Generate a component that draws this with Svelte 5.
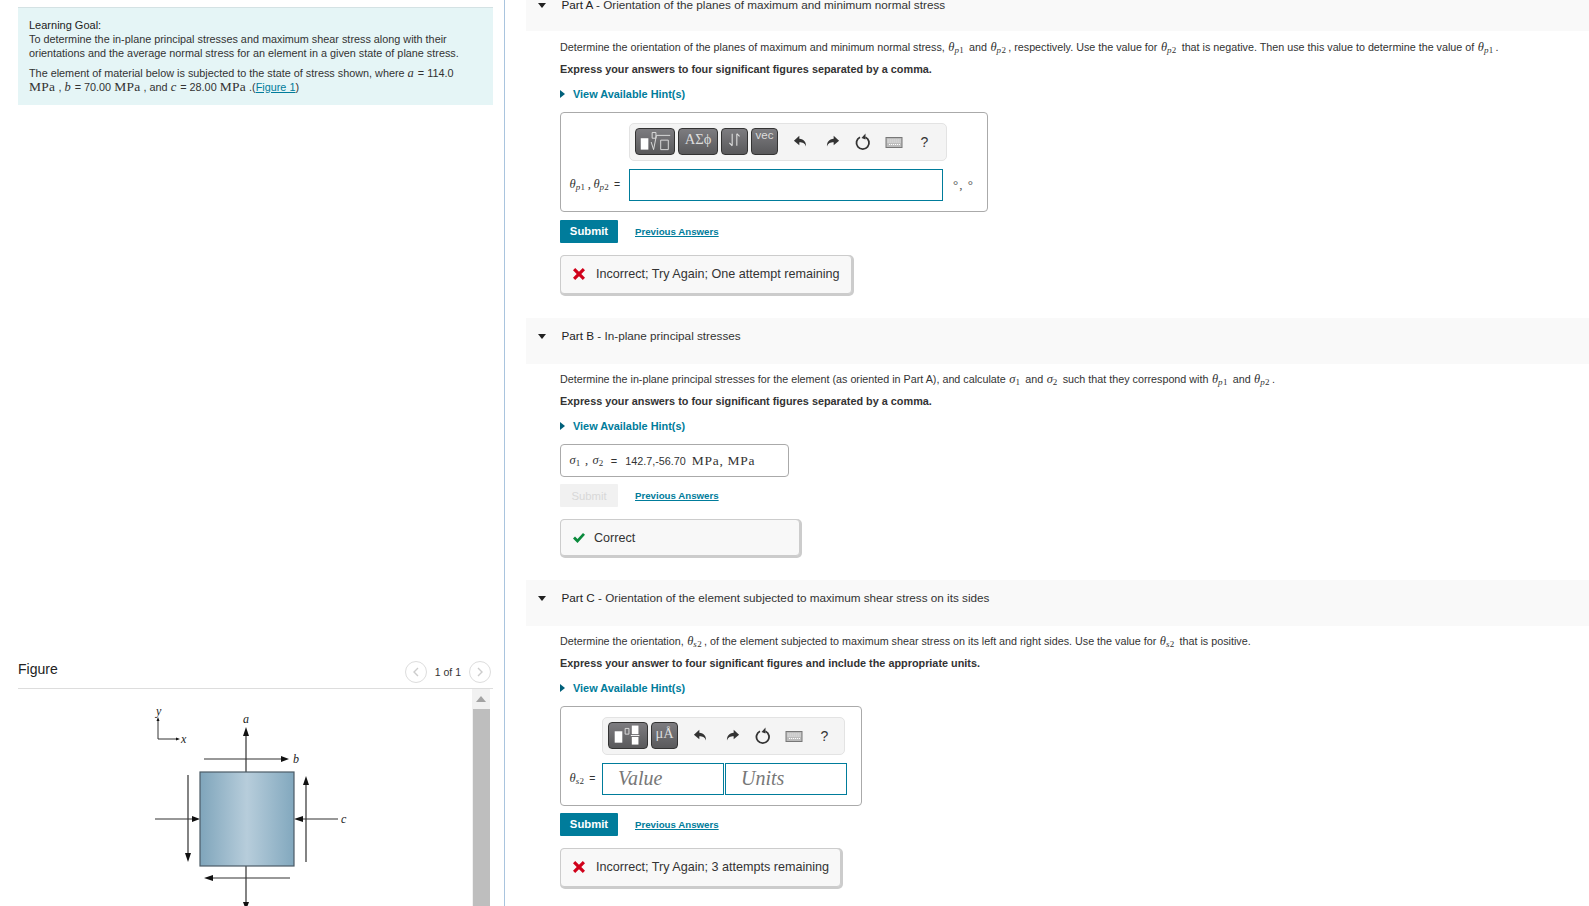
{#snippet sym(letter, sub)}
  <span class="math"><i>{letter}</i><sub>{sub}</sub></span>
{/snippet}

{#snippet theta(kind, num)}
  <span class="math"><i>θ</i><sub><i>{kind}</i>{num}</sub></span>
{/snippet}

{#snippet tools()}
  <span class="tool">
    <svg width="20" height="20" viewBox="0 0 24 24"><path fill="#333" d="M10 8V4.500L3.500 10.500 10 16v-3.600c4 0 6.500 1 8 5 .5-5-2.500-9-8-9.400z" /></svg>
  </span>
  <span class="tool">
    <svg width="20" height="20" viewBox="0 0 24 24"><path fill="#333" d="M14 8V4.500l6.500 6L14 16v-3.600c-4 0-6.500 1-8 5-.5-5 2.500-9 8-9.400z" /></svg>
  </span>
  <span class="tool">
    <svg width="24" height="24" viewBox="0 0 24 24">
      <path fill="none" stroke="#333" stroke-width="1.800" d="M9 7.200a6.300 6.300 0 1 0 5.500 0" />
      <path fill="#333" d="M14.500 3.500v6l-4-1.500z" />
    </svg>
  </span>
  <span class="tool">
    <svg width="24" height="24" viewBox="0 0 24 24">
      <rect x="4" y="7.500" width="16" height="10" fill="#bbb" stroke="#777" />
      <path fill="none" stroke="#fff" stroke-dasharray="1.200 .8" d="M5.500 10h13M5.500 12h13M7 14.500h11" />
    </svg>
  </span>
  <span class="tool help">?</span>
{/snippet}

{#snippet wrong(text)}
  <div class="feedback">
    <svg width="14" height="14" viewBox="0 0 14 14"><path fill="#d0021b" d="M1 3.200 3.200 1 7 4.700 10.800 1 13 3.200 9.300 7 13 10.800 10.800 13 7 9.300 3.200 13 1 10.800 4.700 7z" /></svg>
    <span class="fb-text">{text}</span>
  </div>
{/snippet}

{#snippet hint()}
  <div class="hint"><span class="caret"></span>View Available Hint(s)</div>
{/snippet}

<div class="page">
  <aside class="left">
    <div class="goal">
      <p>
        <span class="goal-title">Learning Goal:</span><br />
        To determine the in-plane principal stresses and maximum shear stress along with their
        orientations and the average normal stress for an element in a given state of plane stress.
      </p>
      <p>
        The element of material below is subjected to the state of stress shown, where <i class="mi">a</i> = 114.0<br />
        <span class="unit">MPa</span> , <i class="mi">b</i> = 70.00 <span class="unit">MPa</span> , and <i class="mi">c</i> = 28.00
        <span class="unit">MPa</span> .(<a href="#fig">Figure 1</a>)
      </p>
    </div>

    <section class="figure">
      <header class="fig-head">
        <h2>Figure</h2>
        <div class="pager">
          <span class="circle">
            <svg width="10" height="10" viewBox="0 0 10 10"><path fill="none" stroke="#ccc" stroke-width="1.400" d="M7 1 3 5l4 4" /></svg>
          </span>
          <span class="count">1 of 1</span>
          <span class="circle">
            <svg width="10" height="10" viewBox="0 0 10 10"><path fill="none" stroke="#ccc" stroke-width="1.400" d="m3 1 4 4-4 4" /></svg>
          </span>
        </div>
      </header>
      <div class="fig-body">
        <div class="fig-canvas">
          <svg class="diagram" width="230" height="217" viewBox="0 0 230 217">
            <defs>
              <linearGradient id="steel" x1="0" x2="1" y1="0" y2="0">
                <stop offset="0" stop-color="#7fa5bb" />
                <stop offset=".5" stop-color="#b7cddb" />
                <stop offset="1" stop-color="#82a8be" />
              </linearGradient>
            </defs>
            <g fill="none" stroke="#333" stroke-width="1.200">
              <path stroke-width="1" d="M18 30v19h19" />
              <path d="M106 45v37M64 69h79M106 176v37M15 129h37M162 129h36M48 85v79M166 94v78M72 188h78" />
            </g>
            <g fill="#111">
              <path d="M18 27l1.500 4h-3zM40 49l-4 1.500v-3z" />
              <path d="M106 37l3 9h-6zM149 69l-8 3v-6zM60 129l-8 3v-6zM154 129l9-3v6zM48 172l-3-9h6zM166 86l3 9h-6zM64 188l9-3v6zM106 220l-3-8h6z" />
            </g>
            <rect x="60" y="82" width="94" height="94" fill="url(#steel)" stroke="#4b5b66" stroke-width="1.200" />
            <g class="fig-label">
              <text x="16" y="25">y</text>
              <text x="41" y="53">x</text>
              <text x="103" y="33">a</text>
              <text x="153" y="73">b</text>
              <text x="201" y="133">c</text>
            </g>
          </svg>
        </div>
        <div class="scroll">
          <span class="scroll-up"></span>
          <span class="thumb"></span>
        </div>
      </div>
    </section>
  </aside>

  <main class="right">
    <section class="part part-a">
      <div class="part-head"><span class="tri"></span><b>Part A</b> - Orientation of the planes of maximum and minimum normal stress</div>
      <div class="part-body">
        <p class="ask">Determine the orientation of the planes of maximum and minimum normal stress, {@render theta("p", "1")} and {@render theta("p", "2")}, respectively. Use the value for {@render theta("p", "2")} that is negative. Then use this value to determine the value of {@render theta("p", "1")}.</p>
        <p class="express">Express your answers to four significant figures separated by a comma.</p>
        {@render hint()}
        <div class="answer wide">
          <div class="toolbar t-a">
            <span class="btn b40">
              <svg width="40" height="27" viewBox="0 0 40 27">
                <rect x="5" y="9" width="8" height="12" fill="#fff" />
                <path fill="none" stroke="#ddd" d="M17 3h4v6h-4zM16 13l2.500 8 3-15H36M26 11h8v10h-8z" />
              </svg>
            </span>
            <span class="btn b40 greek">ΑΣϕ</span>
            <span class="btn b27">
              <svg width="27" height="27" viewBox="0 0 27 27"><path fill="none" stroke="#ddd" stroke-width="1.200" d="M11 4v13m-3-3 3 3M16 17V4m0 0 3 3" /></svg>
            </span>
            <span class="btn b27 vec">vec</span>
            <div class="tools">{@render tools()}</div>
          </div>
          <div class="row">
            <span class="lab lab-a">{@render theta("p", "1")}<span class="math"> ,  </span>{@render theta("p", "2")} =</span>
            <span class="input i-a"></span>
            <span class="deg">°, °</span>
          </div>
        </div>
        <div class="actions">
          <span class="submit">Submit</span>
          <a class="prev" href="#a">Previous Answers</a>
        </div>
        {@render wrong("Incorrect; Try Again; One attempt remaining")}
      </div>
    </section>

    <section class="part part-b">
      <div class="part-head"><span class="tri"></span><b>Part B</b> - In-plane principal stresses</div>
      <div class="part-body">
        <p class="ask">Determine the in-plane principal stresses for the element (as oriented in Part A), and calculate {@render sym("σ", "1")} and {@render sym("σ", "2")} such that they correspond with {@render theta("p", "1")} and {@render theta("p", "2")}.</p>
        <p class="express">Express your answers to four significant figures separated by a comma.</p>
        {@render hint()}
        <div class="answer done">
          {@render sym("σ", "1")}<span class="math">, </span>{@render sym("σ", "2")} = <span class="val">142.7,-56.70</span> <span class="unit big">MPa, MPa</span>
        </div>
        <div class="actions">
          <span class="submit off">Submit</span>
          <a class="prev" href="#b">Previous Answers</a>
        </div>
        <div class="feedback ok">
          <svg width="14" height="14" viewBox="0 0 14 14"><path fill="#0a8a3c" d="M1 7.500 3 5.500l2.500 2.600L11 2l2 1.800-7.500 8.200z" /></svg>
          <span class="fb-text">Correct</span>
        </div>
      </div>
    </section>

    <section class="part part-c">
      <div class="part-head"><span class="tri"></span><b>Part C</b> - Orientation of the element subjected to maximum shear stress on its sides</div>
      <div class="part-body">
        <p class="ask">Determine the orientation, {@render theta("s", "2")}, of the element subjected to maximum shear stress on its left and right sides. Use the value for {@render theta("s", "2")} that is positive.</p>
        <p class="express">Express your answer to four significant figures and include the appropriate units.</p>
        {@render hint()}
        <div class="answer narrow">
          <div class="toolbar t-c">
            <span class="btn b40">
              <svg width="40" height="27" viewBox="0 0 40 27">
                <rect x="6" y="8" width="8" height="12" fill="#fff" />
                <path fill="none" stroke="#ddd" d="M17 5h4v6h-4z" />
                <rect x="24" y="2" width="7" height="9" fill="#fff" />
                <rect x="24" y="14" width="7" height="8" fill="#fff" />
                <path stroke="#fff" d="M23 12.500h9" />
              </svg>
            </span>
            <span class="btn b27 greek">μÅ</span>
            <div class="tools">{@render tools()}</div>
          </div>
          <div class="row">
            <span class="lab lab-c">{@render theta("s", "2")} =</span>
            <span class="input ph">Value</span>
            <span class="input ph">Units</span>
          </div>
        </div>
        <div class="actions">
          <span class="submit">Submit</span>
          <a class="prev" href="#c">Previous Answers</a>
        </div>
        {@render wrong("Incorrect; Try Again; 3 attempts remaining")}
      </div>
    </section>
  </main>
</div>

<style>
  :global(body) {
    margin: 0;
    background: #fff;
    color: #333;
    font-family: "Liberation Sans", Arial, sans-serif;
    font-size: 11px;
  }

  .page {
    display: flex;
    height: 906px;
    overflow: hidden;
  }

  .left {
    width: 505px;
    flex: none;
    box-sizing: border-box;
    padding: 7px 11px 0 18px;
    border-right: 1.5px solid #a9c4de;
    display: flex;
    flex-direction: column;
  }

  .goal {
    background: #e5f5f6;
    border-top: 1px solid #d4e2e4;
    padding: 10px 11px 4px;
    font-size: 10.83px;
    line-height: 14px;
    height: 98px;
    box-sizing: border-box;
  }

  .goal p {
    margin: 0 0 6px;
  }

  .goal-title {
    font-size: 11px;
    color: #222;
  }

  .goal a {
    color: #007c9b;
  }

  .mi {
    font-family: "Liberation Serif", serif;
    font-size: 12.5px;
    margin-right: 1px;
  }

  .unit {
    font-family: "Liberation Serif", serif;
    font-size: 13.5px;
    letter-spacing: 0.3px;
  }

  .figure {
    margin-top: auto;
    height: 251px;
    display: flex;
    flex-direction: column;
  }

  .fig-head {
    height: 33px;
    flex: none;
    display: flex;
    align-items: center;
    justify-content: space-between;
    border-bottom: 1px solid #ddd;
    box-sizing: content-box;
  }

  h2 {
    margin: 0;
    font-weight: normal;
    font-size: 14px;
    color: #222;
    position: relative;
    top: -3px;
  }

  .pager {
    display: flex;
    align-items: center;
    gap: 8px;
    margin-right: 2px;
  }

  .circle {
    width: 20px;
    height: 20px;
    border: 1px solid #ddd;
    border-radius: 50%;
    display: flex;
    align-items: center;
    justify-content: center;
  }

  .count {
    font-size: 10.5px;
  }

  .fig-body {
    flex: 1;
    min-height: 0;
    display: flex;
  }

  .fig-canvas {
    width: 454px;
    padding: 1px 0 0 122px;
    box-sizing: border-box;
  }

  .diagram {
    display: block;
  }

  .fig-label text {
    font-family: "Liberation Serif", serif;
    font-style: italic;
    font-size: 12px;
    fill: #222;
  }

  .scroll {
    width: 18px;
    background: #f1f1f1;
    display: flex;
    flex-direction: column;
    align-items: center;
  }

  .scroll-up {
    margin: 7px 0 7px;
    border-left: 5px solid transparent;
    border-right: 5px solid transparent;
    border-bottom: 6px solid #a3a3a3;
  }

  .thumb {
    flex: 1;
    width: 17px;
    background: #bebebe;
  }

  /* page is scrolled a little, Part A header runs off the top */
  .right {
    flex: 1;
    min-width: 0;
    margin-top: -15px;
    padding-left: 20.5px;
  }

  .part-head {
    height: 46px;
    box-sizing: border-box;
    padding: 11px 0 0 36px;
    background: #f9f9f9;
    font-size: 11.72px;
    line-height: 14px;
    position: relative;
  }

  .part-a .part-head {
    padding-top: 15px;
    line-height: 10px;
  }

  .part-head b {
    font-weight: normal;
    color: #222;
  }

  .tri {
    position: absolute;
    left: 12px;
    top: 16px;
    border-left: 4.5px solid transparent;
    border-right: 4.5px solid transparent;
    border-top: 5px solid #222;
  }

  .part-a .tri {
    top: 18px;
  }

  .part-body {
    padding: 8.5px 0 23px 34.5px;
  }

  .part-a .part-body,
  .part-b .part-body {
    padding-bottom: 24px;
  }

  .part-c .part-body {
    padding-top: 7.5px;
  }

  .part-a .actions {
    margin-top: 8px;
  }

  .ask {
    margin: 0;
    font-size: 10.75px;
    line-height: 14px;
  }

  .express {
    margin: 8px 0 0;
    font-size: 10.85px;
    font-weight: bold;
    line-height: 14px;
  }

  .hint {
    margin-top: 11px;
    color: #007c9b;
    font-size: 10.9px;
    font-weight: bold;
    line-height: 14px;
    display: flex;
    align-items: center;
  }

  .caret {
    border-top: 4px solid transparent;
    border-bottom: 4px solid transparent;
    border-left: 5px solid #00607a;
    margin-right: 8px;
  }

  .math {
    font-family: "Liberation Serif", serif;
    font-size: 12.5px;
    white-space: pre;
    margin: 0 2px 0 0.5px;
  }

  .math sub {
    font-size: 9px;
    line-height: 0;
    letter-spacing: 0.3px;
    vertical-align: -2px;
  }

  .answer {
    margin-top: 11px;
    border: 1px solid #aaa;
    border-radius: 4px;
    box-sizing: border-box;
    background: #fff;
  }

  .wide {
    width: 428px;
    height: 100px;
  }

  .narrow {
    width: 302px;
    height: 100px;
  }

  .done {
    width: 229px;
    height: 33px;
    display: flex;
    align-items: center;
    gap: 2px;
    padding-left: 8px;
    white-space: pre;
  }

  .val {
    font-size: 10.8px;
    margin-left: 3px;
  }

  .big {
    font-size: 13.5px;
    letter-spacing: 0.7px;
    margin-left: 4px;
  }

  .toolbar {
    display: flex;
    align-items: center;
    gap: 3px;
    height: 38px;
    box-sizing: border-box;
    margin-top: 10px;
    padding-left: 5px;
    background: #f4f4f4;
    border: 1px solid #e3e3e3;
    border-radius: 5px;
  }

  .t-a {
    width: 318px;
    margin-left: 68px;
  }

  .t-c {
    width: 243px;
    margin-left: 41px;
  }

  .btn {
    height: 27px;
    border: 1px solid #333;
    border-radius: 4px;
    box-sizing: border-box;
    background: linear-gradient(#7d7c80, #59595b);
    color: #ddd;
    display: flex;
    justify-content: center;
    overflow: hidden;
  }

  .b40 {
    width: 40px;
  }

  .b27 {
    width: 27px;
  }

  .greek {
    font-family: "Liberation Serif", serif;
    font-size: 14.5px;
    line-height: 20px;
  }

  .vec {
    font-size: 11.5px;
    line-height: 13px;
  }

  .tools {
    display: flex;
    align-items: center;
    margin-left: 4px;
  }

  .tool {
    width: 31px;
    display: flex;
    justify-content: center;
    align-items: center;
  }

  .help {
    font-size: 14px;
  }

  .row {
    display: flex;
    align-items: center;
    margin-top: 8px;
  }

  .lab {
    box-sizing: border-box;
    padding-left: 8px;
    white-space: pre;
    font-size: 10.5px;
  }

  .lab-a {
    width: 68px;
  }

  .lab-c {
    width: 41px;
  }

  .input {
    height: 32px;
    border: 1px solid #007c9b;
    box-sizing: border-box;
    display: block;
  }

  .i-a {
    width: 314px;
  }

  .deg {
    margin-left: 10px;
    font-family: "Liberation Serif", serif;
    font-size: 13px;
    letter-spacing: 1px;
    color: #555;
  }

  .ph {
    width: 122px;
    margin-right: 1px;
    padding-left: 15px;
    font-family: "Liberation Serif", serif;
    font-style: italic;
    font-size: 20px;
    line-height: 28px;
    color: #777;
  }

  .actions {
    display: flex;
    align-items: center;
    margin-top: 7px;
  }

  .submit {
    width: 58px;
    height: 23px;
    background: #007c9b;
    color: #fff;
    border-radius: 1px;
    font-size: 11.3px;
    font-weight: bold;
    display: flex;
    align-items: center;
    justify-content: center;
  }

  .submit.off {
    background: #f1f1f1;
    color: #d8d8d8;
    font-weight: normal;
  }

  .prev {
    margin-left: 17px;
    color: #007c9b;
    font-size: 9.7px;
    font-weight: bold;
  }

  .feedback {
    margin-top: 12px;
    width: fit-content;
    height: 39px;
    box-sizing: border-box;
    padding: 0 11px;
    display: flex;
    align-items: center;
    gap: 10px;
    background: #f8f8f8;
    border: 1px solid #ccc;
    border-radius: 4px;
    box-shadow: 1px 1px 0 1px #ccc;
  }

  .fb-text {
    font-size: 12.6px;
    color: #333;
  }

  .ok {
    width: 240px;
    height: 37px;
    gap: 8px;
  }
</style>
